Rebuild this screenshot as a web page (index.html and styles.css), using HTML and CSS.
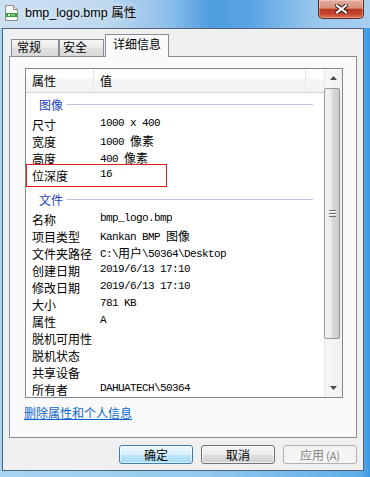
FILE: index.html
```html
<!DOCTYPE html>
<html lang="zh-CN">
<head>
<meta charset="utf-8">
<title>bmp_logo.bmp 属性</title>
<link rel="stylesheet" href="styles.css">
</head>
<body>
<div class="window">
  <div class="titlebar">
    <svg class="app-icon" width="13" height="16" viewBox="0 0 13 16">
      <path d="M0.5 0.5 H8.5 L12.5 4.5 V15.5 H0.5 Z" fill="#fdfdfd" stroke="#8c8c8c"/>
      <path d="M8.5 0.5 V4.5 H12.5" fill="#e2e2e2" stroke="#8c8c8c"/>
      <rect x="1" y="8" width="11" height="4" fill="#36a23f"/>
      <rect x="3" y="9" width="2" height="2" fill="#d8f0d0"/>
      <rect x="6" y="9.5" width="4" height="1" fill="#bfe6b6"/>
    </svg>
    <span class="title">bmp_logo.bmp 属性</span>
    <div class="close">
      <svg width="13" height="10" viewBox="0 0 13 10">
        <path d="M2 1.5 L11 8.5 M11 1.5 L2 8.5" stroke="#3b1812" stroke-width="4.2" stroke-linecap="square"/>
        <path d="M2 1.5 L11 8.5 M11 1.5 L2 8.5" stroke="#ffffff" stroke-width="2.2" stroke-linecap="square"/>
      </svg>
    </div>
  </div>
  <div class="client">
    <div class="tabs">
      <div class="tab t1">常规</div>
      <div class="tab t2">安全</div>
      <div class="tab sel">详细信息</div>
    </div>
    <div class="panel">
      <div class="listview">
        <div class="lv-main">
          <div class="lv-header">
            <div class="hc c1">属性</div>
            <div class="hc c2">值</div>
            <div class="hc c3"></div>
          </div>
          <div class="group"><span>图像</span><i></i></div>
          <div class="row"><span class="k">尺寸</span><span class="v">1000 x 400</span></div>
          <div class="row"><span class="k">宽度</span><span class="v">1000 <span class="cj">像素</span></span></div>
          <div class="row"><span class="k">高度</span><span class="v">400 <span class="cj">像素</span></span></div>
          <div class="row marked"><span class="k">位深度</span><span class="v">16</span></div>
          <div class="group g2"><span>文件</span><i></i></div>
          <div class="row"><span class="k">名称</span><span class="v">bmp_logo.bmp</span></div>
          <div class="row"><span class="k">项目类型</span><span class="v">Kankan BMP <span class="cj">图像</span></span></div>
          <div class="row"><span class="k">文件夹路径</span><span class="v">C:\<span class="cj">用户</span>\50364\Desktop</span></div>
          <div class="row"><span class="k">创建日期</span><span class="v">2019/6/13 17:10</span></div>
          <div class="row"><span class="k">修改日期</span><span class="v">2019/6/13 17:10</span></div>
          <div class="row"><span class="k">大小</span><span class="v">781 KB</span></div>
          <div class="row"><span class="k">属性</span><span class="v">A</span></div>
          <div class="row"><span class="k">脱机可用性</span><span class="v"></span></div>
          <div class="row"><span class="k">脱机状态</span><span class="v"></span></div>
          <div class="row"><span class="k">共享设备</span><span class="v"></span></div>
          <div class="row"><span class="k">所有者</span><span class="v">DAHUATECH\50364</span></div>
        </div>
        <div class="scrollbar">
          <div class="sb-btn">
            <svg width="7" height="4" viewBox="0 0 7 4"><path d="M0 4 L3.5 0 L7 4 Z" fill="#4a4a4a"/></svg>
          </div>
          <div class="thumb">
            <svg width="7" height="7" viewBox="0 0 7 7">
              <rect x="0" y="0" width="7" height="1" fill="#6e6e6e"/>
              <rect x="0" y="1" width="7" height="1" fill="#ffffff"/>
              <rect x="0" y="3" width="7" height="1" fill="#6e6e6e"/>
              <rect x="0" y="4" width="7" height="1" fill="#ffffff"/>
              <rect x="0" y="6" width="7" height="1" fill="#6e6e6e"/>
            </svg>
          </div>
          <div class="sb-space"></div>
          <div class="sb-btn">
            <svg width="7" height="4" viewBox="0 0 7 4"><path d="M0 0 L7 0 L3.5 4 Z" fill="#4a4a4a"/></svg>
          </div>
        </div>
      </div>
      <a class="link" href="#">删除属性和个人信息</a>
    </div>
    <div class="buttons">
      <div class="btn default">确定</div>
      <div class="btn">取消</div>
      <div class="btn disabled">应用<span class="acc">(A)</span></div>
    </div>
  </div>
</div>
</body>
</html>
```

FILE: styles.css
```css
html, body {
  margin: 0;
  padding: 0;
  background: #ffffff;
}

.window {
  width: 370px;
  height: 477px;
  display: flex;
  flex-direction: column;
  overflow: hidden;
  background: linear-gradient(to right, #a7d4f2 0%, #93caef 55%, #5eaee9 97%, #3c9ae4 100%);
  font-family: "Noto Sans CJK SC", "Liberation Sans", sans-serif;
}

/* ---------- title bar ---------- */
.titlebar {
  height: 28px;
  flex: none;
  display: flex;
  align-items: flex-start;
  background: linear-gradient(to right, #cde1f3 0%, #bed8f0 28%, #8fc0ea 45%, #4f9de0 57%, #5aa4e2 68%, #97c6ed 84%, #a9cff0 100%);
}

.app-icon {
  margin: 5px 0 0 5px;
  flex: none;
}

.title {
  margin: 5px 0 0 7px;
  font-family: "Liberation Sans", "Noto Sans CJK SC", sans-serif;
  font-size: 12.5px;
  line-height: 16px;
  color: #000;
  text-shadow: 0 0 6px rgba(255, 255, 255, 0.9);
}

.close {
  margin-left: auto;
  margin-right: 6px;
  width: 46px;
  height: 19px;
  box-sizing: border-box;
  border: 1px solid #5b2a22;
  border-top: none;
  border-radius: 0 0 5px 5px;
  background: linear-gradient(#e6ad9e 0%, #d88f7c 45%, #bb3720 52%, #c6462c 78%, #de7551 100%);
  box-shadow: inset 0 0 0 1px rgba(255, 255, 255, 0.3);
  display: flex;
  align-items: center;
  justify-content: center;
}

/* ---------- client ---------- */
.client {
  margin-left: 2px;
  width: 362px;
  height: 443px;
  flex: none;
  box-sizing: border-box;
  border: 1px solid #4f6479;
  background: #f0f0f0;
  padding: 5px 6px 0 6px;
}

.tabs {
  display: flex;
  align-items: flex-end;
  height: 22px;
  padding-left: 2px;
}

.tab {
  box-sizing: border-box;
  height: 17px;
  border: 1px solid #898c95;
  border-bottom: none;
  background: linear-gradient(#f5f5f5, #e9e9e9 50%, #dfdfdf 51%, #d9d9d9);
  font-size: 12px;
  line-height: 14px;
  color: #000;
  white-space: nowrap;
}

.t1 {
  width: 48px;
  padding-left: 5px;
}

.t2 {
  width: 45px;
  padding-left: 3px;
}

.tab.sel {
  width: 64px;
  height: 23px;
  margin-left: 1px;
  margin-bottom: -1px;
  padding-top: 1px;
  padding-left: 7px;
  line-height: 16px;
  background: #fafafa;
  position: relative;
  z-index: 1;
}

.panel {
  box-sizing: border-box;
  height: 382px;
  border: 1px solid #898c95;
  background: #fafafa;
  padding: 11px 13px 0 15px;
}

/* ---------- list view ---------- */
.listview {
  box-sizing: border-box;
  height: 330px;
  border: 1px solid #828790;
  background: #ffffff;
  display: flex;
}

.lv-main {
  flex: 1;
  overflow: hidden;
}

.lv-header {
  height: 24px;
  box-sizing: border-box;
  border-bottom: 1px solid #d5d5d5;
  background: linear-gradient(#ffffff 0%, #ffffff 40%, #f6f7f8 42%, #f2f3f5 100%);
  display: flex;
}

.hc {
  box-sizing: border-box;
  height: 23px;
  padding: 1px 0 0 6px;
  font-size: 12px;
  line-height: 22px;
  color: #000;
  border-right: 1px solid #e3e5e8;
}

.c1 { width: 68px; }
.c2 { width: 212px; }
.c3 { flex: 1; border-right: none; }

.group {
  height: 23px;
  display: flex;
  align-items: center;
  padding: 0 11px 0 13px;
  font-size: 12px;
  color: #2142c0;
}

.group i {
  flex: 1;
  height: 1px;
  margin-left: 4px;
  background: #b8c5dc;
}

.group.g2 {
  margin-top: 4px;
}

.row {
  height: 17px;
  display: flex;
  font-size: 12px;
  line-height: 17px;
  color: #000;
  position: relative;
  white-space: nowrap;
}

.k {
  width: 68px;
  flex: none;
  box-sizing: border-box;
  padding-left: 6px;
}

.v {
  padding-left: 6px;
  position: relative;
  top: -1px;
  font-family: "Liberation Mono", "Noto Sans CJK SC", monospace;
  font-size: 11px;
  letter-spacing: -0.6px;
}

.v .cj {
  font-family: "Noto Sans CJK SC", sans-serif;
  font-size: 12px;
  letter-spacing: 0;
  vertical-align: -1px;
}

.row.marked::after {
  content: "";
  position: absolute;
  left: 0;
  top: -3px;
  width: 141px;
  height: 23px;
  box-sizing: border-box;
  border: 1px solid #e41e1e;
}

/* ---------- scrollbar ---------- */
.scrollbar {
  width: 18px;
  flex: none;
  display: flex;
  flex-direction: column;
  background: linear-gradient(to right, #e6e6e6 0, #e6e6e6 1px, #f7f7f7 1px, #f1f1f1 100%);
}

.sb-btn {
  height: 18px;
  flex: none;
  display: flex;
  align-items: center;
  justify-content: center;
}

.thumb {
  height: 251px;
  flex: none;
  margin: 1px 2px 0 0;
  box-sizing: border-box;
  border: 1px solid #979797;
  border-radius: 2px;
  background: linear-gradient(to right, #f4f4f4 0%, #e8e8e8 45%, #d8d8d8 55%, #cbcbcb 100%);
  display: flex;
  align-items: center;
  justify-content: center;
}

.sb-space {
  flex: 1;
}

/* ---------- link ---------- */
.link {
  display: block;
  width: max-content;
  margin: 7px 0 0 -1px;
  font-size: 12px;
  line-height: 16px;
  color: #0a66cc;
  text-decoration: underline;
}

/* ---------- buttons ---------- */
.buttons {
  display: flex;
  justify-content: flex-end;
  gap: 8px;
  margin-top: 7px;
}

.btn {
  width: 74px;
  height: 19px;
  box-sizing: border-box;
  border: 1px solid #707070;
  border-radius: 3px;
  background: linear-gradient(#f4f4f4 0%, #ebebeb 50%, #dddddd 51%, #d0d0d0 100%);
  box-shadow: inset 0 0 0 1px rgba(255, 255, 255, 0.7);
  font-size: 12px;
  line-height: 17px;
  text-align: center;
  color: #000;
}

.btn.default {
  border-color: #3c7fb1;
  background: linear-gradient(#eaf6fd 0%, #d9f0fc 50%, #bee6fd 51%, #a7d9f5 100%);
  box-shadow: inset 0 0 0 1px rgba(255, 255, 255, 0.6);
}

.btn.disabled {
  border-color: #adb2b5;
  background: #f4f4f4;
  box-shadow: none;
  color: #838383;
}

.btn .acc {
  margin-left: 2px;
  font-size: 11px;
}
```
